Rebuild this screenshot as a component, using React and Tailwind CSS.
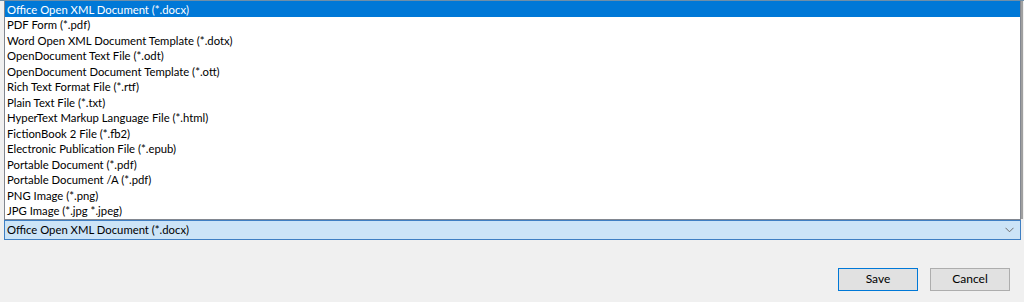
const items = [
  "Office Open XML Document (*.docx)",
  "PDF Form (*.pdf)",
  "Word Open XML Document Template (*.dotx)",
  "OpenDocument Text File (*.odt)",
  "OpenDocument Document Template (*.ott)",
  "Rich Text Format File (*.rtf)",
  "Plain Text File (*.txt)",
  "HyperText Markup Language File (*.html)",
  "FictionBook 2 File (*.fb2)",
  "Electronic Publication File (*.epub)",
  "Portable Document (*.pdf)",
  "Portable Document /A (*.pdf)",
  "PNG Image (*.png)",
  "JPG Image (*.jpg *.jpeg)",
]

export default function App() {
  return (
    <div
      className="w-[1024px] h-[302px] bg-[#f0f0f0] overflow-hidden text-[11.3px] text-black"
      style={{ fontFamily: 'Lato, "Noto Sans", sans-serif' }}
    >
      {/* leftover of the window behind the popup */}
      <div className="h-[1px] bg-[#6f8fa8]" />
      <div className="pl-[4px] pr-[1px] flex">
        <div className="flex-1 flex flex-col">
          <div className="bg-white border border-t-0 border-[#828790]">
            <ul className="flex flex-col">
              {items.map((item, i) => (
                <li
                  key={item}
                  className={
                    i === 0
                      ? "h-[16px] leading-[17px] pl-[2px] whitespace-nowrap bg-[#0078d7] text-white"
                      : "h-[15.5px] leading-[16.5px] pl-[2px] whitespace-nowrap"
                  }
                >
                  {item}
                </li>
              ))}
            </ul>
          </div>
          <div className="h-[20px] bg-[#cce4f7] border border-[#3f7fc3] flex items-center justify-between pl-[2px] pr-[6px]">
            <span className="whitespace-nowrap pt-[1px]">{items[0]}</span>
            <svg width="9" height="6" viewBox="0 0 9 6" fill="none">
              <path d="M0.5 0.8 L4.5 4.8 L8.5 0.8" stroke="#6d6d6d" strokeWidth="1" />
            </svg>
          </div>
        </div>
        <div className="w-[2px] h-[218px] bg-[#a0a0a0]" />
      </div>
      <div className="flex justify-end gap-[12px] pr-[14px] pt-[28px]">
        <button className="w-[80px] h-[23px] bg-[#e1e1e1] border border-[#0078d7] text-[12px]">
          Save
        </button>
        <button className="w-[80px] h-[23px] bg-[#e1e1e1] border border-[#adadad] text-[12px]">
          Cancel
        </button>
      </div>
    </div>
  )
}
